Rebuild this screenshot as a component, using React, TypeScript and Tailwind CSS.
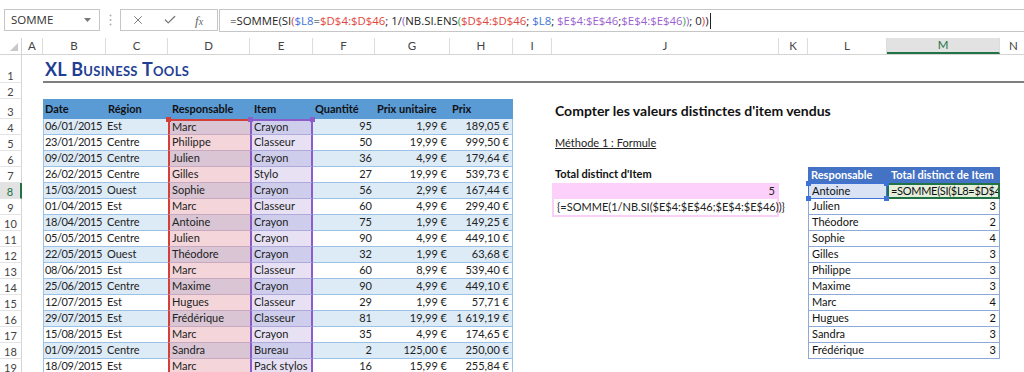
import type { ReactNode } from 'react';
import { X, Check } from 'lucide-react';

const CELL_FONT = "font-['Lato','Open_Sans',sans-serif]";

const COLS = [
  { k: 'A', w: 'w-[21px]' },
  { k: 'B', w: 'w-[63px]' },
  { k: 'C', w: 'w-[62px]' },
  { k: 'D', w: 'w-[82px]' },
  { k: 'E', w: 'w-[63px]' },
  { k: 'F', w: 'w-[62px]' },
  { k: 'G', w: 'w-[75px]' },
  { k: 'H', w: 'w-[63px]' },
  { k: 'I', w: 'w-[39px]' },
  { k: 'J', w: 'w-[227px]' },
  { k: 'K', w: 'w-[29px]' },
  { k: 'L', w: 'w-[79px]' },
  { k: 'M', w: 'w-[113px]' },
  { k: 'N', w: 'w-[28px]' },
];

const SALES: [string, string, string, string, string, string, string][] = [
  ['06/01/2015', 'Est', 'Marc', 'Crayon', '95', '1,99 €', '189,05 €'],
  ['23/01/2015', 'Centre', 'Philippe', 'Classeur', '50', '19,99 €', '999,50 €'],
  ['09/02/2015', 'Centre', 'Julien', 'Crayon', '36', '4,99 €', '179,64 €'],
  ['26/02/2015', 'Centre', 'Gilles', 'Stylo', '27', '19,99 €', '539,73 €'],
  ['15/03/2015', 'Ouest', 'Sophie', 'Crayon', '56', '2,99 €', '167,44 €'],
  ['01/04/2015', 'Est', 'Marc', 'Classeur', '60', '4,99 €', '299,40 €'],
  ['18/04/2015', 'Centre', 'Antoine', 'Crayon', '75', '1,99 €', '149,25 €'],
  ['05/05/2015', 'Centre', 'Julien', 'Crayon', '90', '4,99 €', '449,10 €'],
  ['22/05/2015', 'Ouest', 'Théodore', 'Crayon', '32', '1,99 €', '63,68 €'],
  ['08/06/2015', 'Est', 'Marc', 'Classeur', '60', '8,99 €', '539,40 €'],
  ['25/06/2015', 'Centre', 'Maxime', 'Crayon', '90', '4,99 €', '449,10 €'],
  ['12/07/2015', 'Est', 'Hugues', 'Classeur', '29', '1,99 €', '57,71 €'],
  ['29/07/2015', 'Est', 'Frédérique', 'Classeur', '81', '19,99 €', '1 619,19 €'],
  ['15/08/2015', 'Est', 'Marc', 'Crayon', '35', '4,99 €', '174,65 €'],
  ['01/09/2015', 'Centre', 'Sandra', 'Bureau', '2', '125,00 €', '250,00 €'],
  ['18/09/2015', 'Est', 'Marc', 'Pack stylos', '16', '15,99 €', '255,84 €'],
];

const HEADERS = ['Date', 'Région', 'Responsable', 'Item', 'Quantité', 'Prix unitaire', 'Prix'];

const DISTINCT: [string, string][] = [
  ['Antoine', ''],
  ['Julien', '3'],
  ['Théodore', '2'],
  ['Sophie', '4'],
  ['Gilles', '3'],
  ['Philippe', '3'],
  ['Maxime', '3'],
  ['Marc', '4'],
  ['Hugues', '2'],
  ['Sandra', '3'],
  ['Frédérique', '3'],
];

// formula bar colouring, as Excel shows references while editing
const FORMULA: [string, string][] = [
  ['=SOMME(SI', 'text-[#262626]'],
  ['(', 'text-[#e0453d]'],
  ['$L8', 'text-[#3d72d8]'],
  ['=', 'text-[#262626]'],
  ['$D$4:$D$46', 'text-[#e0453d]'],
  ['; 1/', 'text-[#262626]'],
  ['(', 'text-[#9b5fd1]'],
  ['NB.SI.ENS', 'text-[#262626]'],
  ['(', 'text-[#3aa04a]'],
  ['$D$4:$D$46', 'text-[#e0453d]'],
  ['; ', 'text-[#262626]'],
  ['$L8', 'text-[#3d72d8]'],
  ['; ', 'text-[#262626]'],
  ['$E$4:$E$46', 'text-[#9b5fd1]'],
  [';', 'text-[#262626]'],
  ['$E$4:$E$46', 'text-[#9b5fd1]'],
  [')', 'text-[#3aa04a]'],
  [')', 'text-[#9b5fd1]'],
  ['; 0', 'text-[#262626]'],
  [')', 'text-[#e0453d]'],
  [')', 'text-[#262626]'],
];

function RowHead({ n, active }: { n: number; active?: boolean }) {
  return (
    <div
      className={`w-[22px] shrink-0 flex items-end justify-center pb-[1px] text-[11px] leading-none border-b border-b-[#e4e4e4] ${
        active
          ? 'bg-[#e2e2e2] text-[#217346] border-r-2 border-r-[#217346]'
          : 'bg-white text-[#444] border-r border-r-[#d4d4d4]'
      }`}
    >
      {n}
    </div>
  );
}

function Row({ n, h, active, children }: { n: number; h: string; active?: boolean; children?: ReactNode }) {
  return (
    <div className={`flex ${h} shrink-0`}>
      <RowHead n={n} active={active} />
      <div className="w-[21px] shrink-0" />
      {children}
    </div>
  );
}

function Handle({ cls }: { cls: string }) {
  return <span className={`absolute w-[5px] h-[5px] z-10 ${cls}`} />;
}

function SalesHeader() {
  return (
    <div className="flex w-[470px] shrink-0 h-full bg-[#5b9bd5]">
      {HEADERS.map((t, i) => (
        <div
          key={t}
          className={`${COLS[i + 1].w} shrink-0 h-full flex items-center font-bold text-[11px] text-[#111] whitespace-nowrap ${
            i === 2 || i === 3 ? 'pl-[4px]' : 'pl-[2px]'
          }`}
        >
          {t}
        </div>
      ))}
    </div>
  );
}

function SalesRow({ data, idx }: { data: string[]; idx: number }) {
  const band = idx % 2 === 0;
  const first = idx === 0;
  return (
    <div className="flex w-[470px] shrink-0 h-full">
      {data.map((v, i) => {
        let cls = band ? 'bg-[#ddebf7] border-b-[#9bc2e6]' : 'bg-white border-b-[#9bc2e6]';
        if (i === 2) {
          cls = `${band ? 'bg-[#d9c5d3]' : 'bg-[#f4d5d9]'} border-b-[#c9a9bf] border-l-2 border-l-[#d53f3a] pl-[2px] ${
            first ? 'border-t-2 border-t-[#d53f3a]' : ''
          }`;
        }
        if (i === 3) {
          cls = `${band ? 'bg-[#ceceec]' : 'bg-[#e7e1f3]'} border-b-[#aeabdc] border-x-2 border-x-[#8c5cc9] pl-[2px] ${
            first ? 'border-t-2 border-t-[#8c5cc9]' : ''
          }`;
        }
        if (i === 0) cls += ' border-l border-l-[#9bc2e6] tracking-[-0.4px]';
        if (i === 6) cls += ' border-r border-r-[#9bc2e6]';
        const right = i >= 4;
        return (
          <div
            key={i}
            className={`${COLS[i + 1].w} shrink-0 h-full relative border-b flex items-center text-[11px] text-[#222] whitespace-nowrap ${
              right ? 'justify-end pr-[3px]' : 'pl-[1px]'
            } ${cls}`}
          >
            {v}
            {first && i === 2 && <Handle cls="bg-[#d53f3a] -left-[4px] -top-[4px]" />}
            {first && i === 3 && <Handle cls="bg-[#8c5cc9] -left-[4px] -top-[4px]" />}
            {first && i === 3 && <Handle cls="bg-[#8c5cc9] -right-[4px] -top-[4px]" />}
          </div>
        );
      })}
    </div>
  );
}

function MiddleCell({ r }: { r: number }) {
  if (r === 3)
    return (
      <div className="w-[227px] shrink-0 h-full flex items-center pl-[3px] pt-[2px] whitespace-nowrap font-bold text-[14px] text-[#111] overflow-visible z-10">
        Compter les valeurs distinctes d'item vendus
      </div>
    );
  if (r === 5)
    return (
      <div className="w-[227px] shrink-0 h-full flex items-center pl-[3px] whitespace-nowrap text-[11px] text-[#222] underline">
        Méthode 1 : Formule
      </div>
    );
  if (r === 7)
    return (
      <div className="w-[227px] shrink-0 h-full flex items-end pb-[1px] pl-[3px] whitespace-nowrap font-bold text-[11px] text-[#111]">
        Total distinct d'Item
      </div>
    );
  if (r === 8)
    return (
      <div className="w-[227px] shrink-0 h-full flex items-center justify-end pr-[4px] bg-[#fdd0fb] text-[11px] text-[#222]">
        5
      </div>
    );
  if (r === 9)
    return (
      <div className="w-[227px] shrink-0 h-[18px] flex items-center pl-[3px] border-2 border-t-0 border-[#fbd0f8] bg-white whitespace-nowrap text-[11px] text-[#222]">
        {'{=SOMME(1/NB.SI($E$4:$E$46;$E$4:$E$46))}'}
      </div>
    );
  return <div className="w-[227px] shrink-0" />;
}

function DistinctCells({ r }: { r: number }) {
  if (r === 7)
    return (
      <div className="flex shrink-0 h-full bg-[#4472c4] text-white font-bold text-[11px] whitespace-nowrap">
        <div className="w-[79px] flex items-center pl-[3px]">Responsable</div>
        <div className="w-[113px] flex items-center pl-[4px]">Total distinct de Item</div>
      </div>
    );
  const i = r - 8;
  if (i < 0 || i >= DISTINCT.length) return <div className="w-[192px] shrink-0" />;
  const [name, n] = DISTINCT[i];
  if (i === 0)
    return (
      <div className="flex shrink-0 h-full text-[11px] text-[#111] whitespace-nowrap">
        <div className="w-[79px] relative flex items-center pl-[3px] bg-[#d9e3f3] border border-[#3d72d8]">
          {name}
          <Handle cls="bg-[#3d72d8] -left-[3px] -top-[3px]" />
          <Handle cls="bg-[#3d72d8] -right-[3px] -top-[3px]" />
          <Handle cls="bg-[#3d72d8] -left-[3px] -bottom-[3px]" />
          <Handle cls="bg-[#3d72d8] -right-[3px] -bottom-[3px]" />
        </div>
        <div className="w-[113px] relative flex items-center pl-[2px] bg-[#e3efdc] border-2 border-[#217346] overflow-hidden tracking-[-0.3px]">
          =SOMME(SI($L8=$D$4
        </div>
      </div>
    );
  return (
    <div className="flex shrink-0 h-full text-[11px] text-[#111] whitespace-nowrap">
      <div className="w-[79px] flex items-center pl-[3px] bg-white border-l border-b border-[#8eaadb]">{name}</div>
      <div className="w-[113px] flex items-center justify-end pr-[3px] bg-white border-r border-b border-[#8eaadb]">{n}</div>
    </div>
  );
}

function FormulaBar() {
  return (
    <div className="h-[38px] flex items-start pt-[9px] pl-[4px] bg-white font-['Open_Sans',sans-serif]">
      <div className="w-[96px] h-[22px] shrink-0 border border-[#c6c6c6] flex items-center justify-between pl-[6px] pr-[8px] text-[11.5px] text-[#333]">
        <span>SOMME</span>
        <svg width="7" height="4" viewBox="0 0 7 4">
          <path d="M0 0h7L3.5 4z" fill="#777" />
        </svg>
      </div>
      <div className="w-[20px] h-[22px] shrink-0 flex items-center justify-center">
        <svg width="3" height="12" viewBox="0 0 3 12">
          <circle cx="1.5" cy="1.5" r="1" fill="#b0b0b0" />
          <circle cx="1.5" cy="6" r="1" fill="#b0b0b0" />
          <circle cx="1.5" cy="10.5" r="1" fill="#b0b0b0" />
        </svg>
      </div>
      <div className="w-[98px] h-[22px] shrink-0 border border-[#c6c6c6] flex items-center pl-[10px] gap-[18px] text-[#777]">
        <X size={14} strokeWidth={1.6} />
        <Check size={14} strokeWidth={2.2} />
        <span className="font-['Liberation_Serif',serif] italic text-[13px] text-[#666] leading-none">
          f<span className="text-[10px]">x</span>
        </span>
      </div>
      <div className="ml-[1px] flex-1 h-[23px] border border-r-0 border-[#c6c6c6] flex items-center pl-[10px] text-[11.4px] whitespace-pre">
        <span>
          {FORMULA.map(([t, c], i) => (
            <span key={i} className={c}>
              {t}
            </span>
          ))}
        </span>
        <span className="inline-block w-[1px] h-[16px] bg-[#222] ml-[1px]" />
      </div>
    </div>
  );
}

function ColumnHeader() {
  return (
    <div className="flex h-[17px] border-b border-[#d4d4d4] bg-white">
      <div className="w-[22px] shrink-0 relative border-r border-[#d4d4d4] flex items-end justify-end pr-[3px] pb-[3px]">
        <svg width="8" height="8" viewBox="0 0 8 8">
          <path d="M8 0V8H0z" fill="#c8c8c8" />
        </svg>
      </div>
      {COLS.map((c) => (
        <div
          key={c.k}
          className={`${c.w} shrink-0 flex items-center justify-center text-[11.5px] border-r border-[#dcdcdc] ${
            c.k === 'M' ? 'bg-[#e2e2e2] text-[#217346] border-b-2 border-b-[#217346]' : 'text-[#444]'
          }`}
        >
          {c.k}
        </div>
      ))}
    </div>
  );
}

export default function App() {
  const dataRows = SALES.map((d, idx) => ({ r: idx + 4, d, idx }));
  return (
    <div className={`w-[1024px] h-[372px] overflow-hidden bg-white ${CELL_FONT}`}>
      <FormulaBar />
      <ColumnHeader />

      {/* row 1: title with rule underneath */}
      <Row n={1} h="h-[28px]">
        <div className="flex-1 h-full border-b-2 border-[#7f7f7f] flex items-end pl-[2px] pb-[3px]">
          <span className="font-bold text-[18px] leading-none text-[#1f3f94] [font-variant:small-caps] tracking-[0.3px]">
            XL Business Tools
          </span>
        </div>
      </Row>
      <Row n={2} h="h-4" />
      <Row n={3} h="h-5">
        <SalesHeader />
        <div className="w-[39px] shrink-0" />
        <MiddleCell r={3} />
      </Row>

      {dataRows.map(({ r, d, idx }) => (
        <Row key={r} n={r} h="h-4" active={r === 8}>
          <SalesRow data={d} idx={idx} />
          <div className="w-[39px] shrink-0" />
          <MiddleCell r={r} />
          <div className="w-[29px] shrink-0" />
          <DistinctCells r={r} />
        </Row>
      ))}
    </div>
  );
}
